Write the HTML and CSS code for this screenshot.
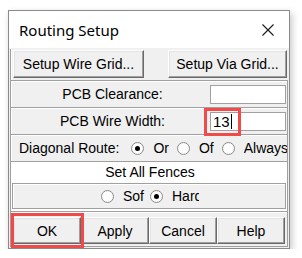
FILE: index.html
```html
<!DOCTYPE html>
<html lang="en">
<head>
    <meta charset="UTF-8">
    <title>Routing Setup</title>
    <link rel="stylesheet" href="styles.css">
</head>
<body>
    <div class="dialog">
        <div class="titlebar">
            <span class="title">Routing Setup</span>
            <svg class="close" width="12" height="12" viewBox="0 0 12 12">
                <path d="M0.5 0.5 L11.5 11.5 M11.5 0.5 L0.5 11.5" stroke="#1a1a1a" stroke-width="1.1" fill="none"/>
            </svg>
        </div>

        <div class="client">
            <div class="grid-row">
                <button class="btn btn-wire">Setup Wire Grid...</button>
                <button class="btn btn-via">Setup Via Grid...</button>
            </div>

            <div class="row field-row">
                <span class="label">PCB Clearance:</span>
                <span class="edit"></span>
            </div>

            <div class="row field-row">
                <span class="label">PCB Wire Width:</span>
                <span class="edit marked">13<span class="caret"></span><span class="mark mark-edit"></span></span>
            </div>

            <div class="row radio-row">
                <span class="radio-label">Diagonal Route:</span>
                <span class="radio checked"></span><span class="opt">Or</span>
                <span class="radio"></span><span class="opt">Of</span>
                <span class="radio"></span><span class="opt opt-clip">Always</span>
            </div>

            <div class="fences">
                <div class="fences-title">Set All Fences</div>
                <div class="fences-box">
                    <span class="radio"></span><span class="opt opt-sof">Sof</span>
                    <span class="radio checked"></span><span class="opt opt-hard">Hard</span>
                </div>
            </div>

            <div class="action-row">
                <div class="marked"><button class="btn">OK</button><span class="mark mark-ok"></span></div>
                <button class="btn">Apply</button>
                <button class="btn">Cancel</button>
                <button class="btn">Help</button>
            </div>
        </div>
    </div>
</body>
</html>
```

FILE: styles.css
```css
body {
    margin: 0;
    background: #fff;
    font-family: 'Liberation Sans', Arial, sans-serif;
    font-size: 14px;
    color: #000;
}

.dialog {
    margin: 10px 0 0 8px;
    width: 280px;
    height: 237px;
    border: 1px solid #8a8a8a;
    background: #f0f0f0;
    box-shadow: 2px 3px 7px rgba(0, 0, 0, 0.22);
    display: flex;
    flex-direction: column;
}

.titlebar {
    height: 37px;
    background: #fff;
    display: flex;
    align-items: center;
    justify-content: space-between;
    padding: 0 15px 0 10px;
}

.title {
    font-family: 'Noto Sans', sans-serif;
    font-size: 15px;
    padding-top: 1px;
}

.client {
    flex: 1;
    padding: 1px;
    display: flex;
    flex-direction: column;
}

.btn {
    font-family: 'Liberation Sans', Arial, sans-serif;
    font-size: 14px;
    color: #000;
    background: #f0f0f0;
    border: 1px solid;
    border-color: #fff #696969 #696969 #fff;
    box-shadow: inset -1px -1px #a0a0a0, inset 1px 1px #e3e3e3;
    padding: 0;
    height: 27px;
}

.grid-row {
    height: 31px;
    box-sizing: border-box;
    padding: 1px 1px 0 2px;
    display: flex;
    justify-content: space-between;
    border-left: 1px solid #a0a0a0;
    box-shadow: inset 1px 0 #fff;
}

.btn-wire {
    width: 131px;
    height: 28px;
}

.btn-via {
    width: 119px;
    height: 28px;
}

.row {
    height: 27px;
    box-sizing: border-box;
    border: 1px solid #a0a0a0;
    border-bottom: 0;
    box-shadow: inset 1px 1px #fff;
    display: flex;
    align-items: center;
}

.field-row {
    padding: 0 1px 0 2px;
}

.label {
    flex: 1;
    text-align: center;
    padding-left: 2px;
}

.edit {
    position: relative;
    width: 76px;
    height: 19px;
    box-sizing: border-box;
    border: 1px solid #a0a0a0;
    background: #fff;
    font-size: 15px;
    line-height: 17px;
    padding-left: 2px;
    margin-top: 1px;
}

.caret {
    display: inline-block;
    width: 1px;
    height: 15px;
    background: #000;
    vertical-align: -2px;
    margin-left: 1px;
}

.marked {
    position: relative;
}

.mark {
    position: absolute;
    border: 3px solid #f04a4a;
    pointer-events: none;
}

.mark-edit {
    left: -7px;
    top: -5px;
    width: 31px;
    height: 22px;
}

.mark-ok {
    left: -2px;
    top: -4px;
    width: 67px;
    height: 29px;
}

.radio-row {
    padding-left: 8px;
    overflow: hidden;
    white-space: nowrap;
}

.radio-label {
    flex: none;
    margin-right: 12px;
}

.radio {
    flex: none;
    width: 11px;
    height: 11px;
    border: 1px solid #8c8c8c;
    border-radius: 50%;
    background: radial-gradient(circle, #fff 55%, #e8e8e8 100%);
    display: flex;
    align-items: center;
    justify-content: center;
}

.radio.checked::after {
    content: '';
    width: 5px;
    height: 5px;
    border-radius: 50%;
    background: #000;
}

.opt {
    flex: none;
    margin: 0 8px 0 9px;
}

.opt-clip {
    flex: 1;
    min-width: 0;
    overflow: hidden;
    margin-right: 0;
}

.fences {
    height: 50px;
    box-sizing: border-box;
    border: 1px solid #a0a0a0;
    border-bottom: 0;
    background: #fff;
    display: flex;
    flex-direction: column;
}

.fences-title {
    height: 21px;
    text-align: center;
    line-height: 21px;
    padding-left: 2px;
}

.fences-box {
    height: 26px;
    box-sizing: border-box;
    margin: 0 1px;
    border: 1px solid #a0a0a0;
    box-shadow: inset 1px 1px #fff;
    background: #f0f0f0;
    display: flex;
    align-items: center;
    padding-left: 88px;
    white-space: nowrap;
}

.opt-sof {
    width: 22px;
    overflow: hidden;
    margin: 0 5px 0 9px;
}

.opt-hard {
    width: 27px;
    overflow: hidden;
}

.action-row {
    flex: 1;
    border: 1px solid #a0a0a0;
    box-shadow: inset 1px 1px #fff;
    display: grid;
    grid-template-columns: repeat(4, 68px);
    padding: 5px 0 0 2px;
    align-content: start;
}

.action-row .btn {
    width: 68px;
}
```
